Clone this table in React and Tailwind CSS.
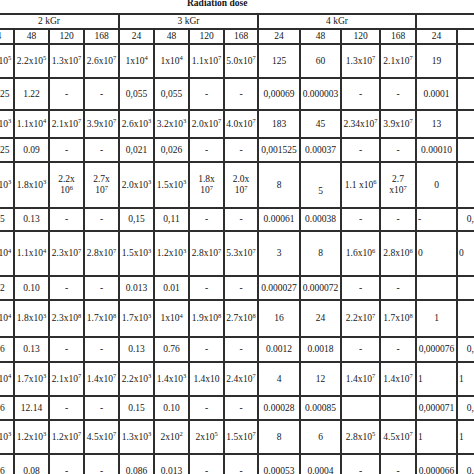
import React from 'react';

// column widths (first column starts 20px off the left edge)
const colW = [
  'w-[35px]', 'w-[35px]', 'w-[35px]', 'w-[35px]', 'w-[35px]', 'w-[35px]', 'w-[35px]',
  'w-[34px]', 'w-[42px]', 'w-[41px]', 'w-[39px]', 'w-[36px]', 'w-[41px]', 'w-[41px]',
];

const groups = [
  { label: '2 kGr', w: 'w-[140px]' },
  { label: '3 kGr', w: 'w-[139px]' },
  { label: '4 kGr', w: 'w-[158px]' },
  { label: '', w: 'w-[82px]' },
];

const hours = ['24', '48', '120', '168', '24', '48', '120', '168', '24', '48', '120', '168', '24', ''];

// "^" = superscript, "|" = line break, "<" = left aligned, "_" = sits low
const rows = [
  { h: 'h-[34px]', c: ['1.5x10^5', '2.2x10^5', '1.3x10^7', '2.6x10^7', '1x10^4', '1x10^4', '1.1x10^7', '5.0x10^7', '125', '60', '1.3x10^7', '2.1x10^7', '19', ''] },
  { h: 'h-[32px]', c: ['0,0025', '1.22', '-', '-', '0,055', '0,055', '-', '-', '0,00069', '0.000003', '-', '-', '0.0001', ''] },
  { h: 'h-[28px]', c: ['1.2x10^3', '1.1x10^4', '2.1x10^7', '3.9x10^7', '2.6x10^3', '3.2x10^3', '2.0x10^7', '4.0x10^7', '183', '45', '2.34x10^7', '3.9x10^7', '13', ''] },
  { h: 'h-[24px]', c: ['0,0025', '0.09', '-', '-', '0,021', '0,026', '-', '-', '0,001525', '0.00037', '-', '-', '0.00010', ''] },
  { h: 'h-[46px]', c: ['1.0x10^3', '1.8x10^3', '2.2x|10^6', '2.7x|10^7', '2.0x10^3', '1.5x10^3', '1.8x|10^7', '2.0x|10^7', '8', '_5', '1.1 x10^6', '2.7|x10^7', '0', ''] },
  { h: 'h-[23px]', c: ['0.15', '0.13', '-', '-', '0,15', '0,11', '-', '-', '0.00061', '0.00038', '-', '-', '<-', '0,000'] },
  { h: 'h-[45px]', c: ['1.6x10^4', '1.1x10^4', '2.3x10^7', '2.8x10^7', '1.5x10^3', '1.2x10^3', '2.8x10^7', '5.3x10^7', '3', '8', '1.6x10^6', '2.8x10^6', '<0', '<0'] },
  { h: 'h-[24px]', c: ['0.12', '0.10', '-', '-', '0.013', '0.01', '-', '-', '0.000027', '0.000072', '-', '-', '', ''] },
  { h: 'h-[37px]', c: ['2.0x10^4', '1.8x10^3', '2.3x10^8', '1.7x10^8', '1.7x10^3', '1x10^4', '1.9x10^8', '2.7x10^8', '16', '24', '2.2x10^7', '1.7x10^8', '1', ''] },
  { h: 'h-[25px]', c: ['0.16', '0.13', '-', '-', '0.13', '0.76', '-', '-', '0.0012', '0.0018', '-', '-', '0,000076', '0,000'] },
  { h: 'h-[34px]', c: ['1.5x10^4', '1.7x10^3', '2.1x10^7', '1.4x10^7', '2.2x10^3', '1.4x10^3', '1.4x10', '2.4x10^7', '4', '12', '1.4x10^7', '1.4x10^7', '<1', '<1'] },
  { h: 'h-[24px]', c: ['0.16', '12.14', '-', '-', '0.15', '0.10', '-', '-', '0.00028', '0.00085', '', '', '0,000071', '0,000'] },
  { h: 'h-[34px]', c: ['1.3x10^3', '1.2x10^3', '1.2x10^7', '4.5x10^7', '1.3x10^3', '2x10^2', '2x10^5', '1.5x10^7', '8', '6', '2.8x10^5', '4.5x10^7', '<1', '<1'] },
  { h: 'h-[34px]', c: ['0.16', '0.08', '-', '-', '0.086', '0.013', '-', '-', '0.00053', '0.0004', '-', '-', '0,000066', '0,000'] },
];

const Value = ({ text }) =>
  text.split('|').map((line, i) => {
    const [base, sup] = line.split('^');
    return (
      <span key={i} className="block whitespace-nowrap leading-[11px]">
        {base}
        {sup && <sup className="text-[6.5px]">{sup}</sup>}
      </span>
    );
  });

const Cell = ({ w, text }) => {
  let t = text;
  let align = 'justify-center text-center';
  if (t.startsWith('<')) {
    t = t.slice(1);
    align = 'justify-start text-left pl-[1px]';
  }
  let low = '';
  if (t.startsWith('_')) {
    t = t.slice(1);
    low = 'pt-[12px]';
  }
  return (
    <div className={`${w} shrink-0 h-full flex flex-col items-stretch justify-center border-r-2 border-[#2e2e2e] ${low}`}>
      <div className={`flex ${align}`}>
        <div className="flex flex-col items-center">
          <Value text={t} />
        </div>
      </div>
    </div>
  );
};

export default function App() {
  return (
    <div className="w-[474px] h-[474px] overflow-hidden bg-white text-[#151515] font-['Liberation_Serif',serif] text-[9.5px]">
      <div className="h-[13px] flex items-center pl-[187px] pb-[5px] font-bold text-[9.5px] leading-none">
        Radiation dose
      </div>
      <div className="ml-[-20px] w-[519px] border-t-2 border-[#2e2e2e]">
        <div className="flex h-[15px] border-b-2 border-[#2e2e2e]">
          {groups.map((g, i) => (
            <div key={i} className={`${g.w} shrink-0 flex items-center justify-center border-r-2 border-[#2e2e2e]`}>
              {g.label}
            </div>
          ))}
        </div>
        <div className="flex h-[15px] border-b-2 border-[#2e2e2e]">
          {hours.map((h, i) => (
            <Cell key={i} w={colW[i]} text={h} />
          ))}
        </div>
        {rows.map((r, ri) => (
          <div key={ri} className={`flex ${r.h} border-b-2 border-[#2e2e2e]`}>
            {r.c.map((v, ci) => (
              <Cell key={ci} w={colW[ci]} text={v} />
            ))}
          </div>
        ))}
      </div>
    </div>
  );
}
